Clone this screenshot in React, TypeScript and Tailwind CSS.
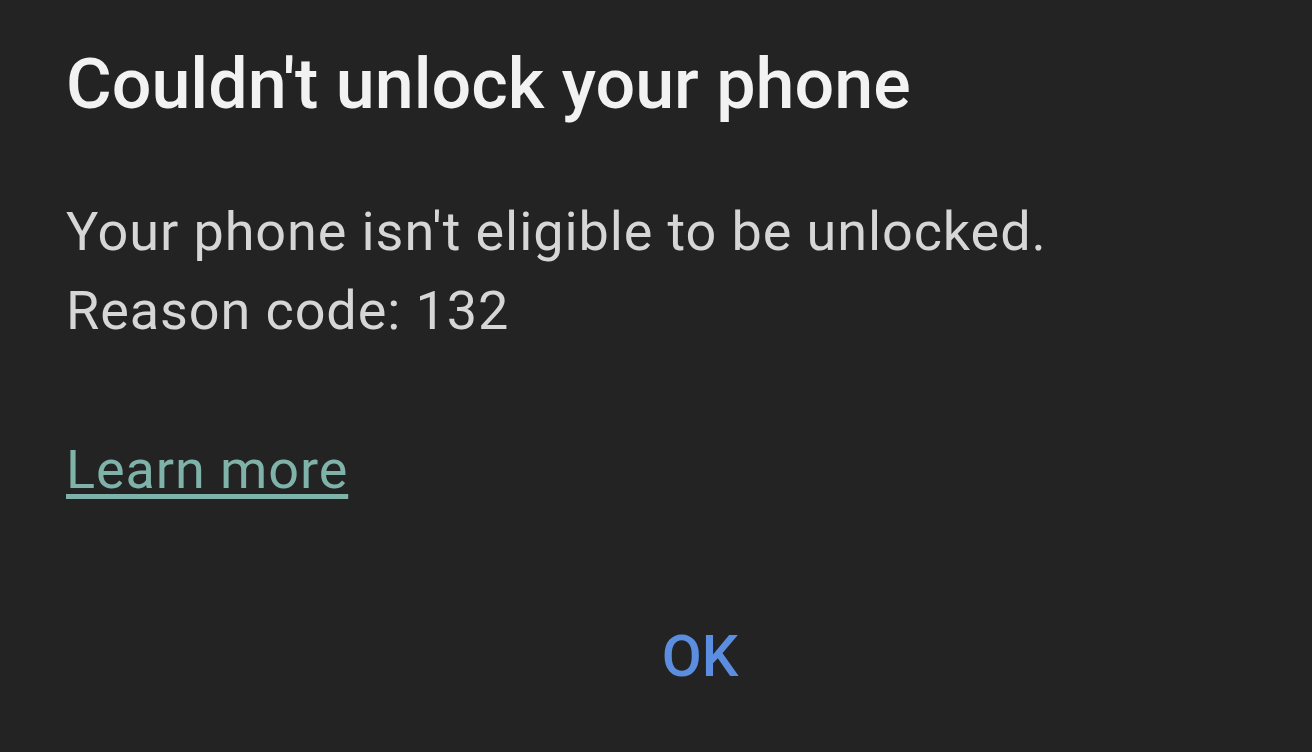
export default function App() {
  return (
    <div className="w-[1312px] h-[752px] bg-[#232323] overflow-hidden flex flex-col" style={{ fontFamily: 'Roboto, "Liberation Sans", sans-serif' }}>
      <div className="pl-[66px] pt-[44px]">
        <h1 className="text-[70px] leading-[80px] font-medium text-[#f2f2f2]">Couldn't unlock your phone</h1>
        <div className="mt-[68px] text-[54px] leading-[79px] tracking-[0.9px] text-[#d6d6d6]">
          <p>Your phone isn't eligible to be unlocked.</p>
          <p>Reason code: 132</p>
        </div>
        <a className="block mt-[90px] text-[54px] leading-[60px] tracking-[0.9px] text-[#7fb2a8] underline underline-offset-[6px] w-fit">Learn more</a>
      </div>
      <div className="flex justify-center mt-[122px]">
        <span className="text-[58px] leading-[68px] font-medium text-[#5b8ee0] pl-[88px]">OK</span>
      </div>
    </div>
  );
}
